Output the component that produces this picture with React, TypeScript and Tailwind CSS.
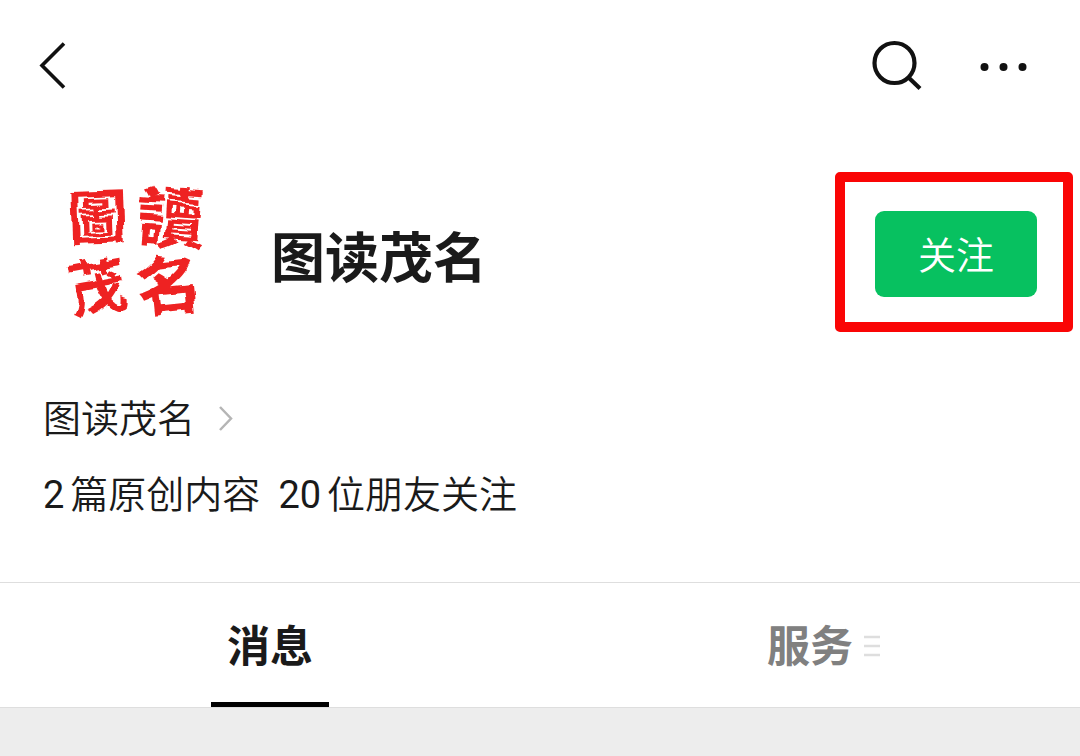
import React from 'react';

interface TabProps {
  label: string;
  active?: boolean;
  children?: React.ReactNode;
}

// Seal-style logo: one brushed character per quarter
const LOGO_CHARS = [
  { char: '圖', x: 1, y: 68, size: 60, tilt: 'rotate(-2 28 46)' },
  { char: '讀', x: 72, y: 70, size: 66, tilt: 'rotate(4 100 46)' },
  { char: '茂', x: 1, y: 138, size: 60, tilt: 'rotate(-10 28 114)' },
  { char: '名', x: 71, y: 137, size: 64, tilt: 'rotate(-6 98 114)' },
];

const Tab: React.FC<TabProps> = ({ label, active = false, children }) => (
  <button
    type="button"
    role="tab"
    aria-selected={active}
    className={`flex flex-1 flex-col items-center justify-between text-[43px] leading-[60px] font-bold ${
      active ? 'text-[#1a1a1a]' : 'text-[#808080]'
    }`}
  >
    <span className="relative mt-[34px]">
      {label}
      {children}
    </span>
    <span className={`h-[5px] w-[118px] ${active ? 'bg-black' : 'bg-transparent'}`} />
  </button>
);

const TopBar: React.FC = () => (
  <header className="flex h-[132px] items-center justify-between pr-[52px] pl-[38px]">
    <button type="button" aria-label="返回">
      <svg width="30" height="50" viewBox="0 0 30 50" fill="none" stroke="#111" strokeWidth="3.6">
        <path d="M26 2.5 4 24.5l22 22" />
      </svg>
    </button>
    <div className="flex items-center gap-[56px]">
      <button type="button" aria-label="搜索">
        <svg width="52" height="52" viewBox="0 0 52 52" fill="none" stroke="#111" strokeWidth="4.2">
          <circle cx="22.5" cy="23" r="20" />
          <path d="M36 37 48 48.5" />
        </svg>
      </button>
      <button type="button" aria-label="更多">
        <svg width="48" height="10" viewBox="0 0 48 10" fill="#111">
          <circle cx="4.5" cy="6" r="4" />
          <circle cx="23.5" cy="6" r="4" />
          <circle cx="42.5" cy="6" r="4" />
        </svg>
      </button>
    </div>
  </header>
);

const Logo: React.FC = () => (
  <svg width="148" height="160" viewBox="0 0 148 160" role="img" aria-label="圖讀茂名">
    <defs>
      <filter id="brush" x="-10%" y="-10%" width="120%" height="120%">
        <feTurbulence type="fractalNoise" baseFrequency="0.045" numOctaves="1" seed="4" />
        <feDisplacementMap in="SourceGraphic" scale="12" xChannelSelector="R" yChannelSelector="G" />
      </filter>
    </defs>
    <g fill="#ee2222" fontWeight="700" filter="url(#brush)">
      {LOGO_CHARS.map(({ char, x, y, size, tilt }) => (
        <text key={char} x={x} y={y} fontSize={size} transform={tilt}>
          {char}
        </text>
      ))}
    </g>
  </svg>
);

export default function App() {
  return (
    <div className="flex min-h-screen flex-col bg-white font-[Roboto,'Noto_Sans_CJK_SC',sans-serif] text-[#1a1a1a]">
      <TopBar />

      <section className="mt-10 flex h-40 items-center justify-between pr-[7px] pl-[66px]">
        <div className="flex items-center gap-[57px]">
          <Logo />
          <h1 className="pt-4 text-[54px] leading-[72px] font-bold">图读茂名</h1>
        </div>
        {/* Highlighted follow action */}
        <div className="rounded-[5px] border-10 border-[#fa0505] pt-[29px] pr-[26px] pb-[25px] pl-[30px]">
          <button
            type="button"
            className="block h-[86px] w-[162px] rounded-[9px] bg-[#07c160] pt-1 text-[38px] font-[350] text-white"
          >
            关注
          </button>
        </div>
      </section>

      <section className="flex flex-col gap-5 px-[43px] pt-[59px] pb-[59px] text-[38px] leading-[56px] font-[350]">
        <a href="#account" className="flex items-center gap-6">
          图读茂名
          <svg width="16" height="28" viewBox="0 0 16 28" fill="none" stroke="#b5b5b5" strokeWidth="2.5">
            <path d="m1 2 11 11.5L1 25" />
          </svg>
        </a>
        <p className="flex gap-[18px]">
          <span className="flex gap-[6px]">
            <span className="font-normal">2</span>
            篇原创内容
          </span>
          <span className="flex gap-[6px]">
            <span className="font-normal">20</span>
            位朋友关注
          </span>
        </p>
      </section>

      <div role="tablist" className="flex h-[126px] border-y border-[#dedede]">
        <Tab label="消息" active />
        <Tab label="服务">
          <svg
            className="absolute top-[18px] left-full ml-[11px]"
            width="16"
            height="22"
            viewBox="0 0 16 22"
            stroke="#dedede"
            strokeWidth="2.5"
          >
            <path d="M0 2h16M0 11h16M0 20h16" />
          </svg>
        </Tab>
      </div>
      <main className="flex-1 bg-[#ededed]" />
    </div>
  );
}
